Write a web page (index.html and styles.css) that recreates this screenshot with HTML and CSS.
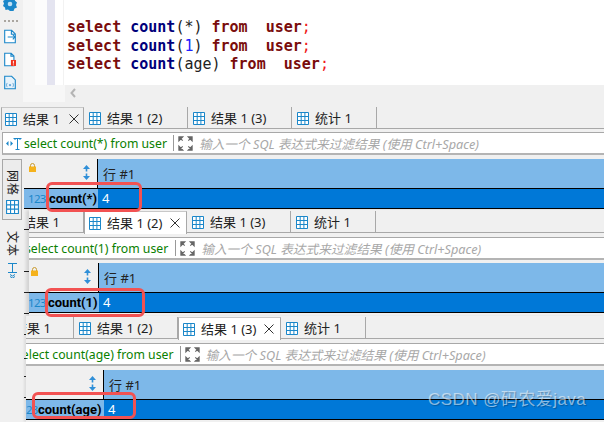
FILE: index.html
```html
<!DOCTYPE html>
<html lang="zh">
<head>
<meta charset="utf-8">
<title>结果</title>
<link rel="stylesheet" href="styles.css">
</head>
<body>
<svg class="defs" width="0" height="0" aria-hidden="true">
  <symbol id="grid" viewBox="0 0 12 13"><path d="M.5.5h11v12H.5zM.5 4.500h11M.5 8.500h11M4.200.5v12M7.900.5v12" fill="#fff" stroke="#1b87c9"/></symbol>
  <symbol id="close" viewBox="0 0 10 10"><path d="M.5.5l9 9M9.500.5l-9 9" fill="none" stroke="#333"/></symbol>
  <symbol id="expand" viewBox="0 0 16 16"><path d="M1 1l4 4M1 1h4L1 5zM15 1l-4 4M15 1h-4l4 4zM1 15l4-4M1 15h4l-4-4zM15 15l-4-4M15 15h-4l4-4z" fill="#666" stroke="#666" stroke-width="1.300"/></symbol>
  <symbol id="itext" viewBox="0 0 16 15"><path d="M0 7.500l2.500-2.500v5zM7 7.500l-2.500-2.500v5z" fill="#1b87c9"/><path d="M7.500 2.500h8M9 2.500v1.500M14 2.500v1.500M11.500 2.500v10.500M9.500 13.500h4" fill="none" stroke="#1b87c9"/></symbol>
  <symbol id="sort" viewBox="0 0 7 15"><path d="M3.500 0L7 4H4.300v2.500H2.700V4H0zM3.500 15L0 11h2.700V8.500h1.600V11H7z" fill="#2f8fd8"/></symbol>
  <symbol id="lock" viewBox="0 0 7 9"><path d="M1.500 4V2.500a2 2 0 0 1 4 0V4" fill="none" stroke="#c99a2e"/><path d="M0 3.500h7V9H0z" fill="#f5b21c"/></symbol>
</svg>

<section class="editor">
  <nav class="tools">
    <svg class="tool gear" viewBox="0 0 14 14"><path d="M7 0l2 1.500 2.500-.2.500 2.500 2 1.700-1 2.500 1 2.500-2.500 1-1 2.500H9L7 14l-2-1.500-2.500.5-.5-2.500-2-1.500 1-2.500-1-2.500 2-1.200L2.500 1 5 1.500z" fill="#1b87c9"/><circle cx="7" cy="7" r="2.300" fill="#bfe0f5"/></svg>
    <i class="dots"></i>
    <svg class="tool" viewBox="0 0 13 15"><path d="M.75.75h7.500l4 4v9.500H.75zM8 .75v4.300h4.200" fill="#fff" stroke="#1b87c9" stroke-width="1.200"/><path d="M4 8h8M9.500 5.500L12 8l-2.500 2.500" fill="none" stroke="#1b87c9" stroke-width="1.200"/></svg>
    <svg class="tool" viewBox="0 0 13 15"><path d="M.75.750h7l3 3v10.500H.75zM7.500.75v3.300h3.500" fill="#fff" stroke="#1b87c9" stroke-width="1.200"/><path d="M7.500 8h5.500v6.500H7.500z" fill="#f0321e"/><path d="M10.200 9v3M10.200 12.800v1" stroke="#fff"/></svg>
    <svg class="tool" viewBox="0 0 13 15"><path d="M.75.750h7.500l4 4v9.500H.75z" fill="#e8f3fb" stroke="#1b87c9" stroke-width="1.200"/><path d="M3.500 8c-1 1.500-1 3 0 4.500M9.500 8c1 1.500 1 3 0 4.500" fill="none" stroke="#6aa9d8"/><circle cx="6.500" cy="10.300" r="1.300" fill="#6aa9d8"/></svg>
  </nav>
  <div class="editor-main">
    <div class="editor-body">
      <div class="margin"></div>
      <div class="ruler"></div>
      <div class="folding"></div>
      <div class="gutter-end"></div>
      <pre class="code"><b class="kw">select</b> <b class="fn">count</b>(*) <b class="kw">from</b>  <b class="kw">user</b><span class="semi">;</span>
<b class="kw">select</b> <b class="fn">count</b>(<span class="num">1</span>) <b class="kw">from</b>  <b class="kw">user</b><span class="semi">;</span>
<b class="kw">select</b> <b class="fn">count</b>(age) <b class="kw">from</b>  <b class="kw">user</b><span class="semi">;</span></pre>
    </div>
    <div class="hscroll">
      <div class="corner"></div>
      <svg class="arrow" viewBox="0 0 6 10"><path d="M5 1L1.500 5 5 9" fill="none" stroke="#b4b4b4" stroke-width="2"/></svg>
    </div>
  </div>
</section>

<main class="results">
  <div class="head head-a">
    <div class="tabs tabs-a">
      <div class="tab tab-on tab-plain"><svg class="ic"><use href="#grid"/></svg><span>结果 1</span><svg class="x"><use href="#close"/></svg></div>
      <div class="tab"><svg class="ic"><use href="#grid"/></svg><span>结果 1 (2)</span></div>
      <div class="tab"><svg class="ic"><use href="#grid"/></svg><span>结果 1 (3)</span></div>
      <div class="tab tab-last"><svg class="ic"><use href="#grid"/></svg><span>统计 1</span></div>
    </div>
    <div class="filter filter-a">
      <svg class="it"><use href="#itext"/></svg>
      <span class="sql">select count(*) from user</span>
      <i class="sep"></i>
      <svg class="ex"><use href="#expand"/></svg>
      <span class="hint">输入一个 SQL 表达式来过滤结果 (使用 Ctrl+Space)</span>
    </div>
  </div>

  <aside class="rail">
    <div class="mode mode-on"><span class="vert">网格</span><svg class="mode-ic"><use href="#grid"/></svg></div>
    <div class="mode"><span class="vert">文本</span><svg class="mode-cur" viewBox="0 0 11 15"><path d="M1 .5h9M5.500.5v9M1 9.500h9M3 11.500l2.500 1.500 2.500-1.500M3 13.500l2.500 1.500 2.500-1.500" fill="none" stroke="#1b87c9"/></svg></div>
    <i class="tick t1"></i><i class="tick t2"></i><i class="tick t3"></i><i class="tick t4"></i><i class="tick t5"></i><i class="tick t6"></i><i class="tick t7"></i><i class="tick t8"></i>
  </aside>

  <div class="table table-a">
    <div class="thead">
      <div class="tcorner"><svg class="lock"><use href="#lock"/></svg><svg class="sort"><use href="#sort"/></svg></div>
      <div class="thcell">行 #1</div>
    </div>
    <div class="trow">
      <div class="rowhead"><span class="type">123</span><b>count(*)</b></div>
      <div class="val">4</div>
      <div class="mark"></div>
    </div>
  </div>

  <div class="panel panel-b">
    <div class="head head-b">
      <div class="tabs tabs-b">
        <div class="tab tab-first"><svg class="ic"><use href="#grid"/></svg><span>结果 1</span></div>
        <div class="tab tab-on"><svg class="ic"><use href="#grid"/></svg><span>结果 1 (2)</span><svg class="x"><use href="#close"/></svg></div>
        <div class="tab"><svg class="ic"><use href="#grid"/></svg><span>结果 1 (3)</span></div>
        <div class="tab tab-last"><svg class="ic"><use href="#grid"/></svg><span>统计 1</span></div>
      </div>
      <div class="filter filter-b">
        <span class="sql">select count(1) from user</span>
        <i class="sep"></i>
        <svg class="ex"><use href="#expand"/></svg>
        <span class="hint">输入一个 SQL 表达式来过滤结果 (使用 Ctrl+Space)</span>
      </div>
    </div>
    <div class="table table-b">
      <div class="thead">
        <div class="tcorner"><svg class="lock"><use href="#lock"/></svg><svg class="sort"><use href="#sort"/></svg></div>
        <div class="thcell">行 #1</div>
      </div>
      <div class="trow">
        <div class="rowhead"><span class="type">123</span><b>count(1)</b></div>
        <div class="val">4</div>
        <div class="mark"></div>
      </div>
    </div>
  </div>

  <div class="panel panel-c">
    <div class="head head-c">
      <div class="tabs tabs-c">
        <div class="tab tab-first"><svg class="ic"><use href="#grid"/></svg><span>结果 1</span></div>
        <div class="tab"><svg class="ic"><use href="#grid"/></svg><span>结果 1 (2)</span></div>
        <div class="tab tab-on"><svg class="ic"><use href="#grid"/></svg><span>结果 1 (3)</span><svg class="x"><use href="#close"/></svg></div>
        <div class="tab tab-last"><svg class="ic"><use href="#grid"/></svg><span>统计 1</span></div>
      </div>
      <div class="filter filter-c">
        <span class="sql">select count(age) from user</span>
        <i class="sep"></i>
        <svg class="ex"><use href="#expand"/></svg>
        <span class="hint">输入一个 SQL 表达式来过滤结果 (使用 Ctrl+Space)</span>
      </div>
    </div>
    <div class="table table-c">
      <div class="thead">
        <div class="tcorner"><svg class="sort"><use href="#sort"/></svg></div>
        <div class="thcell">行 #1</div>
      </div>
      <div class="trow">
        <div class="rowhead"><span class="type">123</span><b>count(age)</b></div>
        <div class="val">4</div>
        <div class="mark"></div>
      </div>
    </div>
  </div>
</main>

<div class="watermark">CSDN @码农爱java</div>
</body>
</html>
```

FILE: styles.css
```css
* { box-sizing: border-box; }
html, body { margin: 0; height: 100%; }
body {
  width: 604px;
  height: 422px;
  overflow: hidden;
  position: relative;
  background: #f0f0f0;
  font-family: "Noto Sans", "Noto Sans CJK SC", sans-serif;
  color: #222;
}
.defs { position: absolute; }

/* editor */
.editor { display: flex; height: 107px; }
.tools {
  width: 23px;
  display: flex;
  flex-direction: column;
  align-items: flex-start;
  padding-left: 4px;
  margin-top: -3px;
  flex: none;
}
.tool { width: 12px; height: 15px; margin-top: 8px; display: block; }
.gear { width: 14px; height: 14px; margin-top: 0; margin-left: -1px; }
.dots { width: 15px; height: 2px; margin-top: 9px; margin-bottom: -1px;
  background: repeating-linear-gradient(90deg, #aaa6a0 0 2px, transparent 2px 4px); }
.editor-main { flex: 1; display: flex; flex-direction: column; min-width: 0; }
.editor-body { height: 85px; display: flex; background: #fff; }
.margin { width: 12px; background: #f7f7f7; flex: none; }
.ruler { width: 12px; background: #fcfcfc; flex: none; }
.folding { width: 8px; background: #e4e4f0; flex: none; }
.gutter-end { width: 9px; border-right: 1px solid #f2f2f2; flex: none; }
.code {
  margin: 0;
  padding: 18px 0 0 3px;
  font: 15px/18.700px "DejaVu Sans Mono", monospace;
  color: #222;
}
.kw { color: #7a0c0c; }
.fn { color: #00007a; }
.num { color: #2020ff; }
.semi { color: #f01818; }
.hscroll { height: 22px; display: flex; align-items: flex-start; }
.corner { width: 42px; height: 17px; background: #f7f7f7; flex: none; }
.arrow { width: 6px; height: 10px; margin: 3px 0 0 5px; flex: none; }

/* results layout */
.results {
  display: grid;
  grid-template-columns: 24px 580px;
  grid-template-rows: 52px 51px 106px 106px;
}
.head-a { grid-column: 1 / 3; }
.rail { grid-column: 1; grid-row: 2 / 5; position: relative; }
.table-a { grid-column: 2; grid-row: 2; }
.panel { min-width: 0; background: #f0f0f0; position: relative; }
.panel-b { grid-column: 2; grid-row: 3; margin-left: 5px; box-shadow: -3px 0 3px rgba(0,0,0,.12); }
.panel-c { grid-column: 2; grid-row: 4; margin-left: 2px; box-shadow: -2px 0 2px rgba(0,0,0,.08); }
.head { overflow: hidden; }

/* tabs */
.tabs {
  display: flex;
  height: 22px;
  border-bottom: 1px solid #a8a8a8;
  font-size: 13px;
  line-height: 20px;
  white-space: nowrap;
}
.tabs-a { margin-left: 1px; }
.tabs-b { margin-left: -29px; margin-top: 1px; }
.tabs-c { margin-left: -35px; margin-top: 1px; }
.tab {
  width: 104px;
  flex: none;
  height: 22px;
  display: flex;
  align-items: center;
  padding-left: 5px;
  border-right: 1px solid #a8a8a8;
}
.tab span { margin-left: 6px; }
.ic { width: 12px; height: 13px; flex: none; }
.x { width: 10px; height: 10px; margin-left: 8px; flex: none; }
.tab-on {
  background: #fff;
  height: 23px;
  border-top: 1px solid #c8c8c8;
  border-left: 1px solid #a8a8a8;
  width: 103px;
  padding-left: 4px;
}
.tab-plain { background: #f0f0f0; width: 83px; padding-left: 3px; }
.tab-plain .x { margin-left: 9px; }
.tab-first { width: 84px; padding-left: 5px; }
.tabs-c .tab-first { width: 83px; }
.tab-last { width: 85px; }

/* filter */
.filter {
  display: flex;
  align-items: center;
  height: 23px;
  background: #fff;
  border-top: 1px solid #a8a8a8;
  border-bottom: 2px solid #b4b4b4;
  white-space: nowrap;
  font-size: 12px;
  overflow: hidden;
}
.filter-a { margin: 3px 0 0 2px; border-left: 1px solid #a8a8a8; padding-left: 3px; }
.filter-b { margin-top: 4px; }
.filter-c { margin-top: 4px; }
.it { width: 16px; height: 15px; flex: none; }
.sql { color: #0a8000; font-size: 12.250px; flex: none; margin-left: 2px; }
.filter-b .sql { margin-left: -4px; }
.filter-c .sql { margin-left: -10px; }
.sep { width: 1px; height: 16px; background: #999; margin-left: 6px; flex: none; }
.filter-b .sep { margin-left: 7px; }
.ex { width: 15px; height: 15px; margin-left: 4px; flex: none; }
.hint { color: #a8a8a8; font-style: italic; margin-left: 6px; font-size: 12.700px; }

/* table */
.table-b { margin-top: 3px; }
.table-c { margin-top: 4px; }
.thead { display: flex; height: 29px; }
.tcorner { width: 74px; position: relative; border-right: 1px solid #000; flex: none; }
.table-b .tcorner { width: 70px; }
.table-c .tcorner { width: 78px; }
.lock { position: absolute; left: 5px; top: 4px; width: 7px; height: 9px; }
.table-b .lock { left: 2px; }
.sort { position: absolute; right: 7px; top: 6px; width: 7px; height: 15px; }
.thcell { flex: 1; background: #7db8e9; padding: 6px 0 0 5px; font-size: 13px; line-height: 18px; }
.trow { display: flex; height: 21px; position: relative; }
.rowhead {
  width: 74px;
  flex: none;
  background: #7db8e9;
  border-top: 1px solid #000;
  border-bottom: 1px solid #000;
  display: flex;
  align-items: center;
  padding-left: 4px;
  font-size: 13px;
  white-space: nowrap;
  overflow: hidden;
}
.rowhead b { color: #000; font: bold 13px/19px Roboto, sans-serif; }
.type { color: #1b87c9; font-size: 11.500px; letter-spacing: -.7px; width: 21px; flex: none; }
.val {
  flex: 1;
  background: #0078d7;
  color: #fff;
  border: 1px solid #000;
  border-width: 1px 0;
  padding-left: 4px;
  font-size: 13px;
  line-height: 19px;
}
.table-b .rowhead { width: 70px; padding-left: 0; }
.table-b .type { margin-left: -1px; width: 20px; }
.table-c .rowhead { width: 78px; padding-left: 0; }
.table-c .type { margin-left: -6px; width: 18px; }

/* red annotation frames */
.mark {
  position: absolute;
  z-index: 2;
  border: 3.500px solid #f25252;
  border-radius: 6px;
  pointer-events: none;
}
.table-a .mark { left: 22px; top: -6px; width: 96px; height: 30px; }
.table-b .mark { left: 16px; top: -4px; width: 100px; height: 29px; }
.table-c .mark { left: 6px; top: -7px; width: 104px; height: 27px; }

/* left rail */
.mode { width: 20px; margin-left: 2px; display: flex; flex-direction: column; align-items: center; }
.mode-on { height: 61px; border: 1px solid #a8a8a8; background: #ececec; padding-top: 10px; }
.mode:not(.mode-on) { padding-top: 11px; }
.vert { writing-mode: vertical-rl; text-orientation: sideways; font-size: 12px; line-height: 16px; letter-spacing: 1px; color: #222; }
.mode-ic { width: 13px; height: 14px; margin-top: 4px; }
.mode-cur { width: 11px; height: 15px; margin-top: 6px; }
.tick { position: absolute; left: 24px; width: 5px; height: 1px; background: #222; }
.t1 { top: 70px; } .t2 { top: 112px; } .t3 { top: 133px; } .t4 { top: 154px; } .t5 { top: 175px; }
.t6 { top: 199px; } .t7 { top: 217px; width: 2px; } .t8 { top: 238px; width: 2px; }

/* watermark */
.watermark {
  position: absolute;
  z-index: 3;
  left: 428px;
  top: 390px;
  font: 17px/20px "Liberation Sans", "Noto Sans CJK SC", sans-serif;
  letter-spacing: .45px;
  color: rgba(255,255,255,.55);
  text-shadow: 1px 1px 1px rgba(0,0,0,.25);
  white-space: nowrap;
}
```
